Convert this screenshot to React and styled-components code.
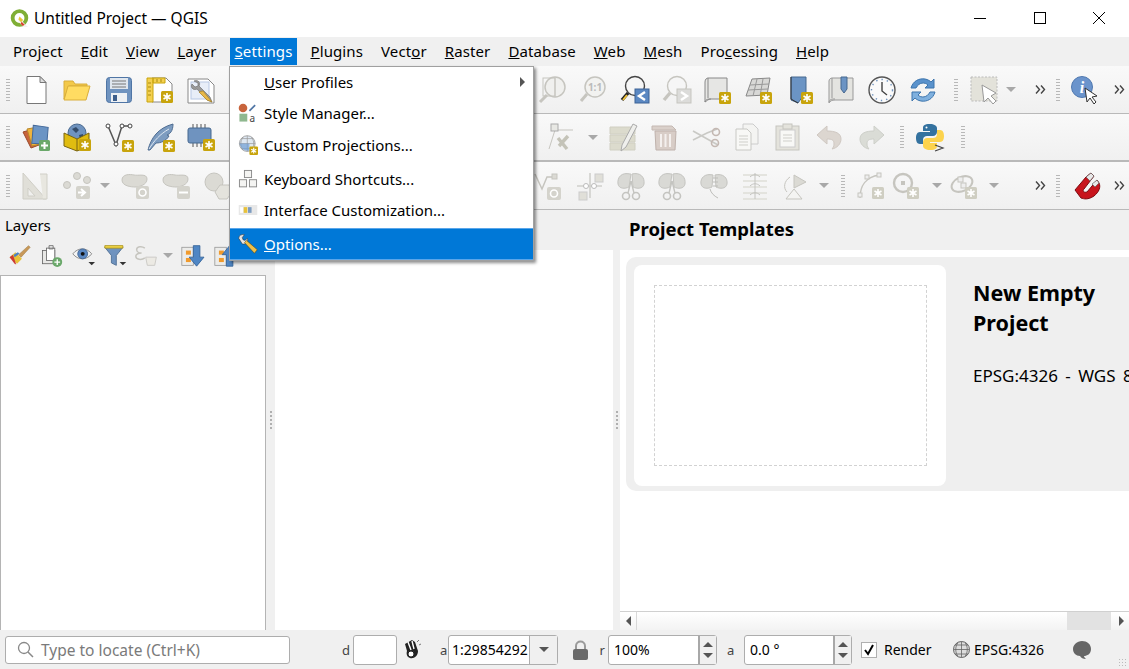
import React from "react";
import styled, { createGlobalStyle } from "styled-components";

const GlobalStyle = createGlobalStyle`
  html, body {
    margin: 0;
    padding: 0;
    background: #f0f0f0;
  }
  body {
    font-family: "Noto Sans", "Open Sans", sans-serif;
    font-size: 14px;
    color: #000;
  }
`;

const Badge = ({ x = 15, y = 15, c = "#c8a40c" }) => (
  <g transform={`translate(${x} ${y})`}>
    <rect width="12" height="12" rx="1.5" fill={c} />
    <path d="M6 2v8M2.5 4l7 4M9.5 4l-7 4" stroke="#fff" strokeWidth="1.6" />
  </g>
);

const G = "#dbdad4";
const GS = "#c6c5bf";

// every toolbar glyph, drawn on a 28x28 box
const glyphs = {
  newFile: (
    <>
      <path d="M5 .5h13l6 6v21H5z" fill="#fff" stroke="#777" />
      <path d="M18 .5v6h6z" fill="#ddd" stroke="#777" />
    </>
  ),
  folder: (
    <>
      <path d="M1 23V5h9l2 3h12v2H6z" fill="#f3c94a" stroke="#d9ae3a" />
      <path d="M5 10h22l-4 14H1z" fill="#ffdc62" stroke="#d9ae3a" />
    </>
  ),
  save: (
    <>
      <rect x="1.5" y="1.5" width="25" height="25" rx="3" fill="#6f93bf" stroke="#4f75a5" />
      <rect x="5" y="2" width="18" height="11" fill="#dfe6ee" />
      <path d="M7 5h14M7 8h14M7 11h14" stroke="#777" />
      <rect x="6" y="17" width="16" height="9" fill="#eef1f4" />
      <rect x="8" y="19" width="4" height="6" fill="#3d5f8c" />
    </>
  ),
  layout: (
    <>
      <path d="M6 2h14l6 6v18H6z" fill="#fff" stroke="#888" />
      <path d="M1 2h6v24H1zM7 2h12v5H7z" fill="#f4d04f" stroke="#c8a40c" />
      <path d="M2 7h3M2 11h3M2 15h3M2 19h3M11 3v3M15 3v3" stroke="#a98a10" />
      <Badge x="15" y="15" />
    </>
  ),
  manager: (
    <>
      <path d="M1 3h20l6 6v18H1z" fill="#fff" stroke="#888" />
      <rect x="4" y="6" width="18" height="17" fill="#e8eef8" stroke="#b8c8e4" />
      <path d="M7 5c4-2 7 2 5 5l11 11 2 5-5-2L10 13C6 15 3 11 5 8l3 3 3-1 0-3z" fill="#9a9a9a" stroke="#666" strokeWidth=".6" />
      <path d="M16 15l9 11-5-2-8-8z" fill="#e8b84a" stroke="#a87f1a" strokeWidth=".6" />
    </>
  ),
  addLayers: (
    <>
      <path d="M1 9l10-3 6 16-8 3z" fill="#c8643c" stroke="#9a4a2a" />
      <path d="M5 6l11-2 3 17-9 2z" fill="#efb33c" stroke="#b8872a" />
      <path d="M10 3l15 0 1 17-15 1z" transform="rotate(8 16 12)" fill="#6b94c4" stroke="#44699a" />
      <rect x="17" y="17" width="11" height="11" rx="1.5" fill="#6aa86a" />
      <path d="M22.5 19v7M19 22.5h7" stroke="#fff" strokeWidth="2" />
    </>
  ),
  gpkg: (
    <>
      <circle cx="14" cy="10" r="9" fill="#6f93bf" stroke="#47688f" />
      <path d="M9 6l4-2 3 3-3 3zM16 12l4-1 0 4-3 1z" fill="#344c6a" />
      <path d="M1 10l13 6 12-6v13l-12 5-13-5z" fill="#e0bc10" stroke="#7a6510" />
      <path d="M14 16v12" stroke="#7a6510" />
      <Badge x="16" y="16" />
    </>
  ),
  digitize: (
    <>
      <path d="M3 3l8 19L17 3h8" fill="none" stroke="#555" strokeWidth="1.5" />
      <circle cx="3" cy="3" r="2" fill="#fff" stroke="#444" />
      <circle cx="11" cy="21" r="2" fill="#fff" stroke="#444" />
      <circle cx="17" cy="3" r="2" fill="#fff" stroke="#444" />
      <circle cx="25" cy="3" r="2" fill="#fff" stroke="#444" />
      <Badge x="17" y="17" />
    </>
  ),
  feather: (
    <>
      <path d="M2 27C5 15 12 5 27 1c0 7-3 10-6 11l2 1c-3 5-8 7-13 7l-6 7z" fill="#7d9cc0" stroke="#4f6d92" />
      <path d="M3 26C8 18 14 11 23 6" stroke="#dfe8f2" fill="none" />
      <Badge x="17" y="17" />
    </>
  ),
  chip: (
    <>
      <path d="M6 1v4M10 1v4M14 1v4M18 1v4M6 20v4M10 20v4M14 20v4" stroke="#555" />
      <rect x="1" y="5" width="23" height="15" rx="2" fill="#6f93bf" stroke="#47688f" />
      <Badge x="16" y="16" />
    </>
  ),
  zoomHalf: (
    <>
      <circle cx="17" cy="11" r="10" fill="#f0f0ee" stroke={GS} strokeWidth="1.5" />
      <path d="M17 1v20" stroke={GS} />
      <rect x="5" y="2" width="12" height="18" fill="none" stroke={GS} />
      <path d="M9 19l-7 7" stroke={GS} strokeWidth="3" />
    </>
  ),
  zoomOne: (
    <>
      <circle cx="16" cy="11" r="10" fill="#f2f2f0" stroke={GS} strokeWidth="1.5" />
      <path d="M8 18l-6 7" stroke={GS} strokeWidth="3" />
      <text x="16" y="15" textAnchor="middle" fontSize="10" fontWeight="700" fill="#bbb" fontFamily="Noto Sans">1:1</text>
    </>
  ),
  zoomLast: (
    <>
      <circle cx="15" cy="10" r="9.5" fill="#f6f6f6" stroke="#444" strokeWidth="1.4" />
      <path d="M8 17l-6 7" stroke="#222" strokeWidth="3.4" />
      <path d="M7 19l-4 5" stroke="#efc23a" strokeWidth="2" />
      <rect x="15" y="13" width="14" height="14" fill="#5b88c2" stroke="#3c6396" />
      <path d="M25 16l-6 4 6 4" fill="none" stroke="#fff" strokeWidth="2.4" />
    </>
  ),
  zoomNext: (
    <>
      <circle cx="15" cy="10" r="9.5" fill="#f6f6f6" stroke={GS} strokeWidth="1.4" />
      <path d="M8 17l-6 7" stroke={GS} strokeWidth="3.4" />
      <rect x="15" y="13" width="14" height="14" fill="#dcdcda" stroke={GS} />
      <path d="M19 16l6 4-6 4" fill="none" stroke="#fff" strokeWidth="2.4" />
    </>
  ),
  mapNew: (
    <>
      <path d="M5 2h19v21H8c-3 0-4 2-6 3V6c0-3 2-4 3-4z" fill="#e6e6e4" stroke="#888" />
      <path d="M5 2v20M2 26c1-3 3-3 6-3" fill="none" stroke="#888" />
      <Badge x="16" y="16" />
    </>
  ),
  gridNew: (
    <>
      <path d="M8 3l18-1-3 17-21 1z" fill="#d8d8d6" stroke="#888" />
      <path d="M6 9l19-1M4 14l20-1M13 3l-4 17M19 3l-3 17" stroke="#999" fill="none" />
      <Badge x="16" y="16" />
    </>
  ),
  bookmark: (
    <>
      <path d="M6 1h15v15l-8 11-7-3z" fill="#6b94c4" stroke="#47688f" />
      <path d="M6 1v22l7 4" fill="none" stroke="#333" />
      <Badge x="16" y="16" />
    </>
  ),
  bookmarks: (
    <>
      <path d="M5 2h21v22H8c-3 0-5 1-6 3V5c0-2 2-3 3-3z" fill="#e4e4e0" stroke="#999" />
      <path d="M5 2v20M2 26c1-3 3-3 6-3" fill="none" stroke="#999" />
      <path d="M14 1h6v12l-3 4-3-4z" fill="#6b94c4" stroke="#47688f" />
    </>
  ),
  clock: (
    <>
      <circle cx="14" cy="14" r="13" fill="#fafafa" stroke="#555" strokeWidth="1.4" />
      <circle cx="14" cy="14" r="10.5" fill="none" stroke="#6f93bf" strokeWidth="1.4" strokeDasharray="1.4 4" />
      <path d="M14 6v9l5 4" fill="none" stroke="#444" strokeWidth="1.4" />
    </>
  ),
  refresh: (
    <>
      <path d="M2 12C4 5 10 2 16 3c3 .5 5 2 6 3l3-3v9h-9l3-3c-3-3-9-3-12 3z" fill="#5a92cc" stroke="#3d75ad" />
      <path d="M26 16c-2 7-8 10-14 9-3-.5-5-2-6-3l-3 3v-9h9l-3 3c3 3 9 3 12-3z" fill="#7fb0de" stroke="#3d75ad" />
    </>
  ),
  selectTool: (
    <>
      <rect x="1" y="1" width="26" height="24" fill="#e3e2da" stroke="#bbb" strokeDasharray="2 1.5" />
      <path d="M12 9l2 17 4-4 5 6 3-3-5-5 5-3z" fill="#fff" stroke="#999" />
    </>
  ),
  info: (
    <>
      <circle cx="12" cy="11" r="10.5" fill="#6b94cc" stroke="#5079b0" />
      <text x="12" y="17" textAnchor="middle" fontSize="16" fontWeight="700" fontStyle="italic" fill="#fff" fontFamily="Liberation Serif">i</text>
      <path d="M15 12l2 14 3-4 4 6 2-2-4-5 5-1z" fill="#fff" stroke="#333" />
    </>
  ),
  nodeTool: (
    <>
      <circle cx="20" cy="8" r="4" fill={G} stroke={GS} />
      <rect x="17" y="16" width="9" height="9" fill={G} stroke={GS} />
    </>
  ),
  attrTool: (
    <>
      <path d="M3 26L9 7M9 7h18" stroke={GS} fill="none" />
      <rect x="5" y="1" width="7" height="7" fill="#e8e8e4" stroke="#aaa" />
      <path d="M12 15l9 11M22 13l-9 10" stroke="#c4c3b8" strokeWidth="3.4" />
    </>
  ),
  editTable: (
    <>
      <path d="M1 4h25v7H1zM1 12h25v7H1zM1 20h25v7H1z" fill="#dcdbcd" stroke="#d0cfc2" />
      <path d="M24 1l4 2-11 21-5 4 1-6z" fill="#efefec" stroke="#aaa" />
    </>
  ),
  trash: (
    <>
      <path d="M1 3h20l4 4H1z" fill="#dad0ca" stroke="#c4b8b2" />
      <path d="M4 8h21l-1 19H5z" fill="#d8cdc7" stroke="#bfb2ac" />
      <path d="M10 11v13M14.5 11v13M19 11v13" stroke="#f4f0ee" strokeWidth="2" />
    </>
  ),
  scissors: (
    <>
      <path d="M1 8l25 14M1 17L15 10l10-4" fill="none" stroke="#c9c9c5" strokeWidth="1.6" />
      <circle cx="24" cy="9" r="3.5" fill="none" stroke="#c4b8b2" strokeWidth="1.6" />
      <circle cx="23" cy="20" r="3.5" fill="none" stroke="#c4b8b2" strokeWidth="1.6" />
    </>
  ),
  copy: (
    <>
      <path d="M10 1h10l5 5v15H10z" fill="#f4f4f2" stroke="#ccc" />
      <path d="M3 6h11l4 4v17H3z" fill="#f8f8f6" stroke="#c8c8c4" />
      <path d="M6 13h9M6 16h9M6 19h9M6 22h9" stroke="#cfcfca" />
    </>
  ),
  paste: (
    <>
      <rect x="2" y="3" width="23" height="24" fill="#e4e3dc" stroke="#c6c5bf" />
      <rect x="6" y="7" width="15" height="17" fill="#f8f8f6" stroke="#ccc" />
      <rect x="9" y="1" width="9" height="5" fill="#e4e3dc" stroke="#c6c5bf" />
      <path d="M9 12h9M9 15h9M9 18h9" stroke="#cfcfca" />
    </>
  ),
  undo: (
    <>
      <path d="M11 3L1 12l10 9v-5c5 0 7 1 7 5 0 2-1 4-2 5 5-1 9-5 9-10 0-6-6-8-14-8z" fill="#dcd6d0" stroke="#cfc8c2" />
    </>
  ),
  redo: (
    <>
      <path d="M17 3l10 9-10 9v-5c-5 0-7 1-7 5 0 2 1 4 2 5-5-1-9-5-9-10 0-6 6-8 14-8z" fill="#dadcd6" stroke="#cdcfc9" />
    </>
  ),
  python: (
    <>
      <path d="M14 1c-6 0-7 2-7 4v3h7v1H4c-3 0-4 3-4 6s1 6 4 6h3v-4c0-3 2-4 4-4h6c2 0 4-2 4-4V5c0-2-3-4-7-4z" fill="#34729f" />
      <path d="M14 27c6 0 7-2 7-4v-3h-7v-1h10c3 0 4-3 4-6s-1-6-4-6h-3v4c0 3-2 4-4 4h-6c-2 0-4 2-4 4v4c0 2 3 4 7 4z" fill="#fcd34d" />
      <circle cx="10.5" cy="4.5" r="1" fill="#fff" />
      <path d="M19 22l8 3-8 3" fill="none" stroke="#444" strokeWidth="1.2" />
    </>
  ),
  setSquare: (
    <>
      <path d="M1 1l23 26H1z" fill="#e0dfd8" stroke="#cfcec6" />
      <path d="M6 16l7 8H6z" fill="#f0f0ee" stroke="#cfcec6" />
      <path d="M18 2h7v25h-4" fill="#e8e7e0" stroke="#d0cfc7" />
    </>
  ),
  pointsMove: (
    <>
      <circle cx="4" cy="13" r="3.5" fill={G} stroke={GS} />
      <circle cx="14" cy="4" r="3.5" fill={G} stroke={GS} />
      <circle cx="24" cy="8" r="3.5" fill={G} stroke={GS} />
      <rect x="13" y="14" width="14" height="13" rx="2" fill="#d4d3cc" />
      <path d="M15 20.5h6M18 17l4 3.5-4 3.5" fill="none" stroke="#fff" strokeWidth="2" />
    </>
  ),
  blobRotate: (
    <>
      <path d="M1 8c0-6 8-6 12-5s13-2 13 4-8 8-12 8S1 14 1 8z" fill={G} stroke={GS} />
      <rect x="15" y="14" width="13" height="13" rx="2" fill="#d4d3cc" />
      <circle cx="21.5" cy="20.5" r="3.5" fill="none" stroke="#fff" strokeWidth="1.6" />
    </>
  ),
  blobScale: (
    <>
      <path d="M1 8c0-6 8-6 12-5s13-2 13 4-8 8-12 8S1 14 1 8z" fill={G} stroke={GS} />
      <rect x="15" y="14" width="13" height="13" rx="2" fill="#d4d3cc" />
      <path d="M17 20.5h9" stroke="#fff" strokeWidth="2" />
    </>
  ),
  merge: (
    <>
      <circle cx="10" cy="10" r="9" fill={G} stroke={GS} />
      <path d="M16 13l9 0 3 7-5 7h-8l-4-7z" fill="#e4e3dd" stroke={GS} />
    </>
  ),
  vertexSync: (
    <>
      <path d="M1 2l7 15 5-12h9" fill="none" stroke={GS} strokeWidth="1.5" />
      <rect x="18" y="2" width="5" height="5" fill={G} stroke={GS} />
      <rect x="13" y="15" width="14" height="13" rx="2" fill="#d4d3cc" />
      <circle cx="20" cy="21.5" r="3.5" fill="none" stroke="#fff" strokeWidth="1.6" />
    </>
  ),
  snapTool: (
    <>
      <path d="M1 14h25M14 1v25" stroke="#d0d0cc" strokeWidth="1.6" />
      <circle cx="10" cy="14" r="2.5" fill="#fff" stroke="#bbb" />
      <circle cx="18" cy="14" r="2.5" fill="#fff" stroke="#bbb" />
      <rect x="19" y="2" width="8" height="8" fill="#e0dfd8" stroke="#ccc" />
      <rect x="3" y="20" width="8" height="8" fill="#e0dfd8" stroke="#ccc" />
    </>
  ),
  split: (
    <>
      <path d="M13 2C5 0 0 5 1 12c1 5 7 5 11 3l2-13zM15 2c8-2 13 3 12 10-1 5-7 5-11 3z" fill="#d9d9d5" stroke="#c4c4c0" />
      <circle cx="9" cy="24" r="3.5" fill="none" stroke="#c4c4c0" strokeWidth="1.6" />
      <circle cx="19" cy="24" r="3.5" fill="none" stroke="#c4c4c0" strokeWidth="1.6" />
      <path d="M11 21l3-12M17 21L14 9" stroke="#c4c4c0" strokeWidth="1.4" />
    </>
  ),
  mergeParts: (
    <>
      <path d="M13 3C5 1 0 6 1 12c1 5 7 5 11 3zM15 3c8-2 13 3 12 9-1 5-7 5-11 3z" fill="#d9d9d5" stroke="#c4c4c0" />
      <path d="M10 17c1 4 4 7 8 9M13 6h5M13 10h5M13 14h5" fill="none" stroke="#bdbdb9" />
    </>
  ),
  stitch: (
    <>
      <path d="M2 3h24M2 9h24M2 15h24M2 21h24M2 27h24" stroke="#deded8" strokeWidth="1.6" />
      <path d="M14 1v26M9 5c3-3 7-3 10 0M9 14c3-3 7-3 10 0M9 23c3-3 7-3 10 0" fill="none" stroke="#c4c4c0" />
    </>
  ),
  flip: (
    <>
      <path d="M12 3l12 7-12 6z" fill={G} stroke={GS} />
      <path d="M12 27l-8 0 8-10 8 10z" fill="#f4f4f2" stroke={GS} />
      <path d="M8 5C2 9 1 16 5 20" fill="none" stroke={GS} />
    </>
  ),
  curve: (
    <>
      <path d="M3 26C3 14 9 5 22 3" fill="none" stroke={GS} strokeWidth="1.4" />
      <rect x="1" y="21" width="4" height="4" fill="#eee" stroke={GS} />
      <rect x="8" y="3" width="4" height="4" fill="#eee" stroke={GS} />
      <rect x="20" y="1" width="4" height="4" fill="#eee" stroke={GS} />
      <Badge x="15" y="15" c="#cfcec2" />
    </>
  ),
  circleNew: (
    <>
      <circle cx="11" cy="11" r="9" fill="none" stroke={GS} strokeWidth="2.4" />
      <rect x="9" y="9" width="4" height="4" fill={GS} />
      <Badge x="15" y="15" c="#cfcec2" />
    </>
  ),
  ellipseNew: (
    <>
      <ellipse cx="12" cy="12" rx="11" ry="7" transform="rotate(-25 12 12)" fill="none" stroke={GS} strokeWidth="2" />
      <rect x="8" y="5" width="5" height="5" fill="#eee" stroke={GS} />
      <rect x="11" y="11" width="5" height="5" fill="#eee" stroke={GS} />
      <Badge x="15" y="15" c="#cfcec2" />
    </>
  ),
  magnet: (
    <>
      <path d="M3 18L14 5l5-4 3 3-10 13c-2 2 0 4 3 3L25 8l2 3c2 4 0 9-5 13-6 4-10 3-13 2z" fill="#c8141c" stroke="#7c0a10" />
      <path d="M14 5l5-4 3 3-4 5zM25 8l2 3-4 4-3-3z" fill="#e8e8e8" stroke="#555" strokeWidth=".6" />
    </>
  ),
  brush: (
    <>
      <path d="M2 16l7-6 8 8-6 6z" fill="#e8c23a" />
      <path d="M2 16l4-3 4 12-2-1z" fill="#cc3a34" />
      <path d="M7 13l5-3 2 2-6 4z" fill="#4a82c4" />
      <path d="M13 13L25 2l2 2-11 12z" fill="#c89858" stroke="#9a7438" strokeWidth=".6" />
    </>
  ),
  addGroup: (
    <>
      <rect x="3" y="8" width="15" height="16" fill="#e8e8e6" stroke="#666" />
      <rect x="8" y="5" width="10" height="15" fill="#fff" stroke="#666" />
      <path d="M11 2h5v4h-5z" fill="none" stroke="#666" />
      <circle cx="21" cy="22" r="6" fill="#6aa86a" />
      <path d="M21 18.5v7M17.5 22h7" stroke="#fff" strokeWidth="1.6" />
    </>
  ),
  eye: (
    <>
      <path d="M1 12c6-8 17-8 23 0-6 8-17 8-23 0z" fill="#f4f4f4" stroke="#777" />
      <circle cx="13" cy="12" r="6" fill="#5b88c2" stroke="#3a6090" />
      <circle cx="13" cy="12" r="2.4" fill="#111" />
      <path d="M20 22h8l-4 4z" fill="#333" />
    </>
  ),
  filter: (
    <>
      <path d="M1 4h22l-8 10v12l-6-3v-9z" fill="#6f93bf" stroke="#47688f" />
      <path d="M1 2h22v3H1z" fill="#f3d84a" stroke="#a89014" />
      <path d="M19 22h8l-4 4z" fill="#333" />
    </>
  ),
  epsilon: (
    <>
      <path d="M12 5c-4-3-10-2-10 2 0 3 4 4 6 4-3 0-7 1-7 4 0 4 7 5 11 2" fill="none" stroke={GS} strokeWidth="1.8" />
      <path d="M13 16h13l-2 10h-9z" fill="#eceae4" stroke={GS} />
    </>
  ),
  expand: (
    <>
      <rect x="1" y="4" width="14" height="22" fill="#ececea" stroke="#999" />
      <rect x="6" y="8" width="6" height="5" fill="#f09a2c" />
      <rect x="6" y="17" width="6" height="5" fill="#f09a2c" />
      <path d="M15 2h8v14h5l-9 11-9-11h5z" fill="#4f86c4" stroke="#2f5f96" />
    </>
  ),
  collapse: (
    <>
      <rect x="1" y="4" width="14" height="22" fill="#ececea" stroke="#999" />
      <rect x="6" y="8" width="6" height="5" fill="#f09a2c" />
      <rect x="6" y="17" width="6" height="5" fill="#f09a2c" />
      <path d="M15 27h8V13h5L19 2l-9 11h5z" fill="#4f86c4" stroke="#2f5f96" />
    </>
  ),
  styleMgr: (
    <>
      <circle cx="7" cy="7" r="6" fill="#c8643c" />
      <rect x="2" y="15" width="11" height="11" fill="#8fb88f" />
      <path d="M16 11l8-8" stroke="#4f75a5" strokeWidth="2.4" />
      <text x="20" y="26" textAnchor="middle" fontSize="14" fill="#444" fontFamily="Noto Sans">a</text>
    </>
  ),
  projections: (
    <>
      <circle cx="13" cy="12" r="11" fill="#dfe8f2" stroke="#888" />
      <path d="M2 12h22M13 1v22M5 5h16M5 19h16M7 3c-4 6-4 12 0 18M19 3c4 6 4 12 0 18" stroke="#999" fill="none" />
      <path d="M2 12h14v10c-7 1-12-3-14-10z" fill="#6f9ed4" opacity=".7" />
      <Badge x="16" y="16" />
    </>
  ),
  shortcuts: (
    <>
      <rect x="9" y="2" width="10" height="10" fill="#f4f4f2" stroke="#888" strokeWidth="1.3" />
      <rect x="2" y="15" width="10" height="10" fill="#f4f4f2" stroke="#888" strokeWidth="1.3" />
      <rect x="16" y="15" width="10" height="10" fill="#f4f4f2" stroke="#888" strokeWidth="1.3" />
    </>
  ),
  customize: (
    <>
      <rect x="1" y="7" width="26" height="14" fill="#e8e8e8" />
      <rect x="8" y="10" width="5" height="8" fill="#e8c23a" />
      <rect x="14" y="10" width="5" height="8" fill="#7d9cc0" />
      <rect x="3" y="10" width="4" height="8" fill="#fff" />
    </>
  ),
  wrench: (
    <>
      <path d="M1 6c0-4 4-6 8-5L6 5l1 3 3 1 3-3c2 5-2 9-7 8z" fill="#e4e4e4" stroke="#333" strokeWidth=".8" />
      <path d="M9 12l3-3 15 13-4 5z" fill="#eec04a" stroke="#5a4510" strokeWidth=".8" />
    </>
  ),
};

const IconSvg = styled.svg`
  display: block;
  flex: none;
  width: ${(p) => p.$size || 28}px;
  height: ${(p) => p.$size || 28}px;
  overflow: visible;
`;

const Icon = ({ name, size }) => (
  <IconSvg viewBox="0 0 28 28" $size={size}>
    {glyphs[name]}
  </IconSvg>
);

const Page = styled.div`
  position: relative;
  width: 1129px;
  height: 669px;
  overflow: hidden;
  display: flex;
  flex-direction: column;
  background: #f0f0f0;
`;

const TitleBar = styled.div`
  height: 37px;
  flex: none;
  display: flex;
  align-items: center;
  background: #fff;
  padding: 0 0 1px 10px;
  box-sizing: border-box;
  font-size: 15.5px;
`;

const TitleText = styled.span`
  margin-left: 5px;
  flex: 1;
`;

const WinButton = styled.div`
  width: 59.5px;
  height: 37px;
  display: flex;
  align-items: center;
  justify-content: center;
`;

const MenuBar = styled.div`
  height: 29px;
  flex: none;
  display: flex;
  align-items: center;
  padding-left: 4px;
  background: #f0f0f0;
`;

const MenuName = styled.div`
  height: 27px;
  line-height: 27px;
  padding: 0 5px;
  margin: 0 4px;
  font-size: 15px;
  letter-spacing: 0.11px;
  white-space: nowrap;
  background: ${(p) => (p.$open ? "#0078d7" : "transparent")};
  color: ${(p) => (p.$open ? "#fff" : "#000")};
`;

const ToolRow = styled.div`
  height: 48px;
  flex: none;
  box-sizing: border-box;
  display: flex;
  align-items: center;
  background: linear-gradient(#f9f9f9, #f0f0f0);
  border-bottom: ${(p) => p.$line}px solid #b9b9b9;
  overflow: hidden;
`;

const Grip = styled.div`
  width: ${(p) => p.$w || 15.5}px;
  height: 24px;
  flex: none;
  display: flex;
  justify-content: center;
  &::before {
    content: "";
    width: 4px;
    height: 24px;
    background-image: radial-gradient(circle, #b8b8b8 0.8px, transparent 1px);
    background-size: 2px 3px;
  }
`;

const Slot = styled.div`
  width: ${(p) => p.$w || 41.3}px;
  flex: none;
  display: flex;
  justify-content: center;
`;

const Gap = styled.div`
  width: ${(p) => p.$w}px;
  flex: none;
`;

const Caret = styled.div`
  width: 14px;
  flex: none;
  display: flex;
  justify-content: center;
  &::before {
    content: "";
    border-left: 5px solid transparent;
    border-right: 5px solid transparent;
    border-top: 5px solid #a8a8a8;
  }
`;

const More = styled.div`
  width: 20px;
  flex: none;
  display: flex;
  justify-content: center;
`;

const MoreIcon = () => (
  <svg width="11" height="9" viewBox="0 0 11 9">
    <path d="M1 .5l3.5 4-3.5 4M6 .5l3.5 4-3.5 4" fill="none" stroke="#444" strokeWidth="1.4" />
  </svg>
);

const renderTools = (tools) =>
  tools.map((t, i) => {
    if (typeof t === "number") return <Gap key={i} $w={t} />;
    if (t === "|") return <Grip key={i} />;
    if (t === "v") return <Caret key={i} />;
    if (t === ">>")
      return (
        <More key={i}>
          <MoreIcon />
        </More>
      );
    if (Array.isArray(t)) {
      return (
        <Slot key={i} $w={t[1]}>
          <Icon name={t[0]} />
        </Slot>
      );
    }
    return (
      <Slot key={i}>
        <Icon name={t} />
      </Slot>
    );
  });

const row1 = [
  "|", "newFile", "folder", "save", "layout", "manager", 309,
  "zoomHalf", "zoomOne", "zoomLast", "zoomNext", "mapNew", "gridNew", "bookmark", "bookmarks", "clock", "refresh",
  4, "|", ["selectTool", 41], "v", 12, ">>", "|", ["info", 36], 8, ">>",
];

const row2 = [
  "|", "addLayers", "gpkg", "digitize", "feather", "chip", 276.5,
  "nodeTool", "attrTool", 5, "v", 2.5,
  "editTable", "trash", "scissors", "copy", "paste", "undo", "redo",
  2.5, "|", "python", 4, "|",
];

const row3 = [
  "|", "setSquare", "pointsMove", "v", 2.4, "blobRotate", "blobScale", "merge", 289.4,
  "vertexSync", "snapTool", "split", "split", "mergeParts", "stitch", "flip", "v",
  4, "|", ["curve", 41], ["circleNew", 30], 9, "v", ["ellipseNew", 40], 3, "v", 29, ">>", "|", ["magnet", 40], 4, ">>",
];

const Main = styled.div`
  flex: 1;
  min-height: 0;
  display: flex;
`;

const LayersDock = styled.div`
  width: 266px;
  flex: none;
  display: flex;
  flex-direction: column;
`;

const DockTitle = styled.div`
  height: 28px;
  padding: 3px 0 0 5px;
  box-sizing: border-box;
  font-size: 15px;
  line-height: 24px;
`;

const LayerTools = styled.div`
  height: 34px;
  flex: none;
  display: flex;
  align-items: center;
  padding-left: 3px;
`;

const LayerSlot = styled.div`
  width: ${(p) => p.$w || 32}px;
  flex: none;
  display: flex;
  justify-content: center;
`;

const LayerTree = styled.div`
  flex: 1;
  margin-top: 3px;
  background: #fff;
  border: 1px solid #b4b4b4;
  border-bottom: 0;
`;

const Splitter = styled.div`
  width: ${(p) => p.$w}px;
  flex: none;
  display: flex;
  align-items: center;
  justify-content: center;
  &::before {
    content: "";
    width: 2px;
    height: 20px;
    background-image: radial-gradient(circle, #b0b0b0 0.8px, transparent 1px);
    background-size: 2px 4px;
  }
`;

const Column = styled.div`
  width: ${(p) => p.$w}px;
  flex: none;
  display: flex;
  flex-direction: column;
`;

const ColumnHead = styled.div`
  height: 40px;
  flex: none;
  box-sizing: border-box;
  display: flex;
  align-items: center;
  padding: 0 0 3px ${(p) => p.$pad || 0}px;
  font-size: 18.5px;
  font-weight: 700;
`;

const ColumnBody = styled.div`
  flex: 1;
  min-height: 0;
  background: #fff;
  display: flex;
  flex-direction: column;
  overflow: hidden;
`;

const TemplateList = styled.div`
  flex: 1;
  padding: 7px 0 0 6px;
`;

const TemplateCard = styled.div`
  height: 234px;
  box-sizing: border-box;
  display: flex;
  padding: 8px 0 5px 8px;
  background: #efefef;
  border-radius: 10px 0 0 10px;
`;

const Preview = styled.div`
  width: 312px;
  flex: none;
  box-sizing: border-box;
  padding: 20px 19px 20px 20px;
  background: #fff;
  border-radius: 8px;
`;

const PreviewFrame = styled.div`
  height: 100%;
  box-sizing: border-box;
  border: 1px dashed #d2d2d2;
`;

const TemplateInfo = styled.div`
  margin-left: 27px;
  padding-top: 13px;
  white-space: nowrap;
`;

const TemplateName = styled.div`
  font-size: 21.5px;
  font-weight: 700;
  line-height: 30px;
  width: 140px;
  white-space: normal;
`;

const TemplateCrs = styled.div`
  margin-top: 26px;
  font-size: 17px;
  line-height: 24px;
  word-spacing: 3px;
`;

const HScroll = styled.div`
  height: 18px;
  flex: none;
  display: flex;
  align-items: center;
  background: linear-gradient(#fff, #f3f3f3);
  border-top: 1px solid #d0d0d0;
`;

const ScrollArrow = styled.div`
  width: 16px;
  flex: none;
  display: flex;
  justify-content: center;
  &::before {
    content: "";
    border-top: 5px solid transparent;
    border-bottom: 5px solid transparent;
    border-${(p) => (p.$right ? "left" : "right")}: 5px solid #555;
  }
`;

const ScrollTrack = styled.div`
  flex: 1;
  align-self: stretch;
  display: flex;
  justify-content: flex-end;
  border-left: 1px solid #d8d8d8;
`;

const ScrollThumb = styled.div`
  width: 44px;
  background: #e2e2e2;
`;

const StatusBar = styled.div`
  height: 39px;
  flex: none;
  display: flex;
  align-items: center;
  padding-left: 5px;
  background: #f0f0f0;
  position: relative;
  font-size: 14px;
`;

const Locator = styled.div`
  width: 285px;
  height: 28px;
  box-sizing: border-box;
  display: flex;
  align-items: center;
  padding-left: 11px;
  background: #fff;
  border: 1px solid #adadad;
  border-radius: 3px;
  color: #7a7a7a;
  font-size: 15.5px;
  gap: 7px;
`;

const FieldLabel = styled.span`
  width: ${(p) => p.$w}px;
  margin-left: ${(p) => p.$gap}px;
  flex: none;
  font-size: 13px;
  color: #444;
`;

const Field = styled.div`
  width: ${(p) => p.$w}px;
  height: 30px;
  margin-left: ${(p) => p.$gap || 0}px;
  flex: none;
  box-sizing: border-box;
  display: flex;
  align-items: center;
  background: #fff;
  border: 1px solid #adadad;
  border-radius: 3px;
  font-size: 14px;
`;

const FieldText = styled.span`
  flex: 1;
  padding-left: ${(p) => p.$pad}px;
  white-space: nowrap;
`;

const ComboButton = styled.div`
  width: 27px;
  height: 100%;
  flex: none;
  display: flex;
  align-items: center;
  justify-content: center;
  background: #f0f0f0;
  border-left: 1px solid #adadad;
  &::before {
    content: "";
    border-left: 5px solid transparent;
    border-right: 5px solid transparent;
    border-top: 5px solid #555;
  }
`;

const Spin = styled.div`
  width: 16px;
  height: 100%;
  flex: none;
  display: flex;
  flex-direction: column;
  align-items: center;
  justify-content: space-evenly;
  background: #f0f0f0;
  border-left: 2px solid #a8a8a8;
`;

const SpinArrow = styled.div`
  border-left: 5px solid transparent;
  border-right: 5px solid transparent;
  ${(p) => (p.$down ? "border-top" : "border-bottom")}: 5px solid #555;
`;

const StatusIcon = styled.div`
  margin-left: ${(p) => p.$gap}px;
  flex: none;
  display: flex;
`;

const Check = styled.div`
  width: 16px;
  height: 16px;
  margin-left: ${(p) => p.$gap}px;
  flex: none;
  box-sizing: border-box;
  display: flex;
  align-items: center;
  justify-content: center;
  background: #fff;
  border: 1px solid #b0b0b0;
`;

const StatusText = styled.span`
  margin-left: ${(p) => p.$gap}px;
  flex: none;
  white-space: nowrap;
`;

const SizeGrip = styled.div`
  position: absolute;
  right: 1px;
  bottom: 1px;
  width: 10px;
  height: 10px;
  background-image: radial-gradient(circle, #bbb 0.8px, transparent 1px);
  background-size: 3px 3px;
`;

const DropMenu = styled.div`
  position: absolute;
  left: 229px;
  top: 66px;
  width: 305px;
  box-sizing: border-box;
  background: #fff;
  border: 1px solid #a0a0a0;
  box-shadow: 2px 2px 3px rgba(0, 0, 0, 0.45);
`;

const DropItem = styled.div`
  height: ${(p) => p.$h || 31}px;
  box-sizing: border-box;
  display: flex;
  align-items: center;
  padding: 0 0 ${(p) => (p.$active ? 1 : 2)}px 8px;
  font-size: 15px;
  background: ${(p) => (p.$active ? "#0078d7" : "transparent")};
  color: ${(p) => (p.$active ? "#fff" : "#000")};
  border: ${(p) => (p.$active ? "1px solid #5aa6ea" : "0")};
  border-width: ${(p) => (p.$active ? "1px 0" : "0")};
  position: relative;
`;

const DropIcon = styled.div`
  width: 20px;
  margin-right: 6px;
  flex: none;
`;

const DropSeparator = styled.div`
  height: ${(p) => p.$h}px;
`;

const SubArrow = styled.div`
  position: absolute;
  right: 8px;
  top: 10px;
  border-top: 5px solid transparent;
  border-bottom: 5px solid transparent;
  border-left: 5px solid #555;
`;

const QgisLogo = () => (
  <svg width="19" height="19" viewBox="0 0 18 18">
    <circle cx="9" cy="8.5" r="6.5" fill="none" stroke="#7fae35" strokeWidth="3.6" />
    <path d="M8 8l9 9-4 0-5-5z" fill="#f4f4f0" />
    <path d="M9 7l3.5 3.5-2 2L8 10z" fill="#e9c53a" />
    <path d="M11 12l3 3-2 1-2-2z" fill="#d8442c" />
  </svg>
);

const menus = [
  ["", "P", "roject"],
  ["", "E", "dit"],
  ["", "V", "iew"],
  ["", "L", "ayer"],
  ["", "S", "ettings"],
  ["", "P", "lugins"],
  ["Vect", "o", "r"],
  ["", "R", "aster"],
  ["", "D", "atabase"],
  ["", "W", "eb"],
  ["", "M", "esh"],
  ["Pro", "c", "essing"],
  ["", "H", "elp"],
];

const App = () => {
  return (
    <Page>
      <GlobalStyle />
      <TitleBar>
        <QgisLogo />
        <TitleText>Untitled Project — QGIS</TitleText>
        <WinButton>
          <svg width="12" height="12" viewBox="0 0 12 12">
            <path d="M0 6.5h12" stroke="#000" />
          </svg>
        </WinButton>
        <WinButton>
          <svg width="12" height="12" viewBox="0 0 12 12">
            <rect x=".5" y=".5" width="11" height="11" fill="none" stroke="#000" />
          </svg>
        </WinButton>
        <WinButton>
          <svg width="12" height="12" viewBox="0 0 12 12">
            <path d="M0 0l12 12M12 0L0 12" stroke="#000" />
          </svg>
        </WinButton>
      </TitleBar>

      <MenuBar>
        {menus.map(([a, u, b], i) => (
          <MenuName key={i} $open={i === 4}>
            {a}
            {i === 0 ? u : <u>{u}</u>}
            {b}
          </MenuName>
        ))}
      </MenuBar>

      <ToolRow $line={1}>{renderTools(row1)}</ToolRow>
      <ToolRow $line={2}>{renderTools(row2)}</ToolRow>
      <ToolRow $line={1}>{renderTools(row3)}</ToolRow>

      <Main>
        <LayersDock>
          <DockTitle>Layers</DockTitle>
          <LayerTools>
            {["brush", "addGroup", "eye", "filter"].map((n) => (
              <LayerSlot key={n}>
                <Icon name={n} size={23} />
              </LayerSlot>
            ))}
            <LayerSlot $w={30}>
              <Icon name="epsilon" size={23} />
            </LayerSlot>
            <Caret />
            <LayerSlot $w={34}>
              <Icon name="expand" size={23} />
            </LayerSlot>
            <LayerSlot>
              <Icon name="collapse" size={23} />
            </LayerSlot>
          </LayerTools>
          <LayerTree />
        </LayersDock>
        <Splitter $w={9} />
        <Column $w={338}>
          <ColumnHead />
          <ColumnBody />
        </Column>
        <Splitter $w={7} />
        <Column $w={509}>
          <ColumnHead $pad={9}>Project Templates</ColumnHead>
          <ColumnBody>
            <TemplateList>
              <TemplateCard>
                <Preview>
                  <PreviewFrame />
                </Preview>
                <TemplateInfo>
                  <TemplateName>New Empty Project</TemplateName>
                  <TemplateCrs>EPSG:4326 - WGS 84</TemplateCrs>
                </TemplateInfo>
              </TemplateCard>
            </TemplateList>
            <HScroll>
              <ScrollArrow />
              <ScrollTrack>
                <ScrollThumb />
                <Gap $w={2} />
              </ScrollTrack>
              <ScrollArrow $right />
            </HScroll>
          </ColumnBody>
        </Column>
      </Main>

      <StatusBar>
        <Locator>
          <svg width="17" height="17" viewBox="0 0 17 17">
            <circle cx="7" cy="7" r="5.5" fill="none" stroke="#888" strokeWidth="1.3" />
            <path d="M11 11l5 5" stroke="#888" strokeWidth="1.5" />
          </svg>
          Type to locate (Ctrl+K)
        </Locator>
        <FieldLabel $w={8} $gap={52}>d</FieldLabel>
        <Field $w={44} $gap={3} />
        <StatusIcon $gap={5}>
          <svg width="20" height="22" viewBox="0 0 20 22">
            <path d="M3 5l7-4 3 2 3 9c0 5-4 8-8 7-3-1-4-4-3-7z" fill="#222" />
            <path d="M6 3l3 8M10 2l2 8" stroke="#fff" strokeWidth="1.4" />
            <circle cx="9" cy="15" r="3" fill="#fff" stroke="#222" />
            <path d="M15 3l2-2M17 6l2-1" stroke="#777" />
          </svg>
        </StatusIcon>
        <FieldLabel $w={6} $gap={18}>a</FieldLabel>
        <Field $w={110} $gap={2}>
          <FieldText $pad={3}>1:29854292</FieldText>
          <ComboButton />
        </Field>
        <StatusIcon $gap={13.5}>
          <svg width="17" height="20" viewBox="0 0 17 20">
            <path d="M4 9V6c0-6 9-6 9 0v3" fill="none" stroke="#9a9a9a" strokeWidth="2" />
            <rect x="1" y="9" width="15" height="11" rx="2" fill="#6a6a6a" />
          </svg>
        </StatusIcon>
        <FieldLabel $w={4} $gap={11}>r</FieldLabel>
        <Field $w={109} $gap={4.5}>
          <FieldText $pad={5}>100%</FieldText>
          <Spin>
            <SpinArrow />
            <SpinArrow $down />
          </Spin>
        </Field>
        <FieldLabel $w={6} $gap={10}>a</FieldLabel>
        <Field $w={108} $gap={11}>
          <FieldText $pad={5}>0.0 °</FieldText>
          <Spin>
            <SpinArrow />
            <SpinArrow $down />
          </Spin>
        </Field>
        <Check $gap={9}>
          <svg width="12" height="12" viewBox="0 0 12 12">
            <path d="M2 6l3 4 5-9" fill="none" stroke="#000" strokeWidth="2" />
          </svg>
        </Check>
        <StatusText $gap={7}>Render</StatusText>
        <StatusIcon $gap={20}>
          <svg width="19" height="19" viewBox="0 0 19 19">
            <circle cx="9.5" cy="9.5" r="8" fill="#ddd" stroke="#666" />
            <path d="M1.5 9.5h16M9.5 1.5v16M3 5h13M3 14h13M6 2.5c-3 4-3 10 0 14M13 2.5c3 4 3 10 0 14" fill="none" stroke="#666" strokeWidth=".8" />
          </svg>
        </StatusIcon>
        <StatusText $gap={3.5}>EPSG:4326</StatusText>
        <StatusIcon $gap={28}>
          <svg width="20" height="20" viewBox="0 0 20 20">
            <path d="M10 1c5 0 9 3 9 8s-4 7-7 7c0 1 1 2 2 3-3 0-5-1-6-3-4 0-7-3-7-7s4-8 9-8z" fill="#666" />
          </svg>
        </StatusIcon>
        <SizeGrip />
      </StatusBar>

      <DropMenu>
        <DropItem>
          <DropIcon />
          <span><u>U</u>ser Profiles</span>
          <SubArrow />
        </DropItem>
        <DropItem $h={32}>
          <DropIcon><Icon name="styleMgr" size={20} /></DropIcon>
          Style Manager...
        </DropItem>
        <DropItem>
          <DropIcon><Icon name="projections" size={20} /></DropIcon>
          Custom Projections...
        </DropItem>
        <DropSeparator $h={3} />
        <DropItem>
          <DropIcon><Icon name="shortcuts" size={20} /></DropIcon>
          Keyboard Shortcuts...
        </DropItem>
        <DropItem>
          <DropIcon><Icon name="customize" size={20} /></DropIcon>
          Interface Customization...
        </DropItem>
        <DropSeparator $h={2} />
        <DropItem $active $h={32}>
          <DropIcon><Icon name="wrench" size={20} /></DropIcon>
          <span><u>O</u>ptions...</span>
        </DropItem>
      </DropMenu>
    </Page>
  );
};

export default App;
